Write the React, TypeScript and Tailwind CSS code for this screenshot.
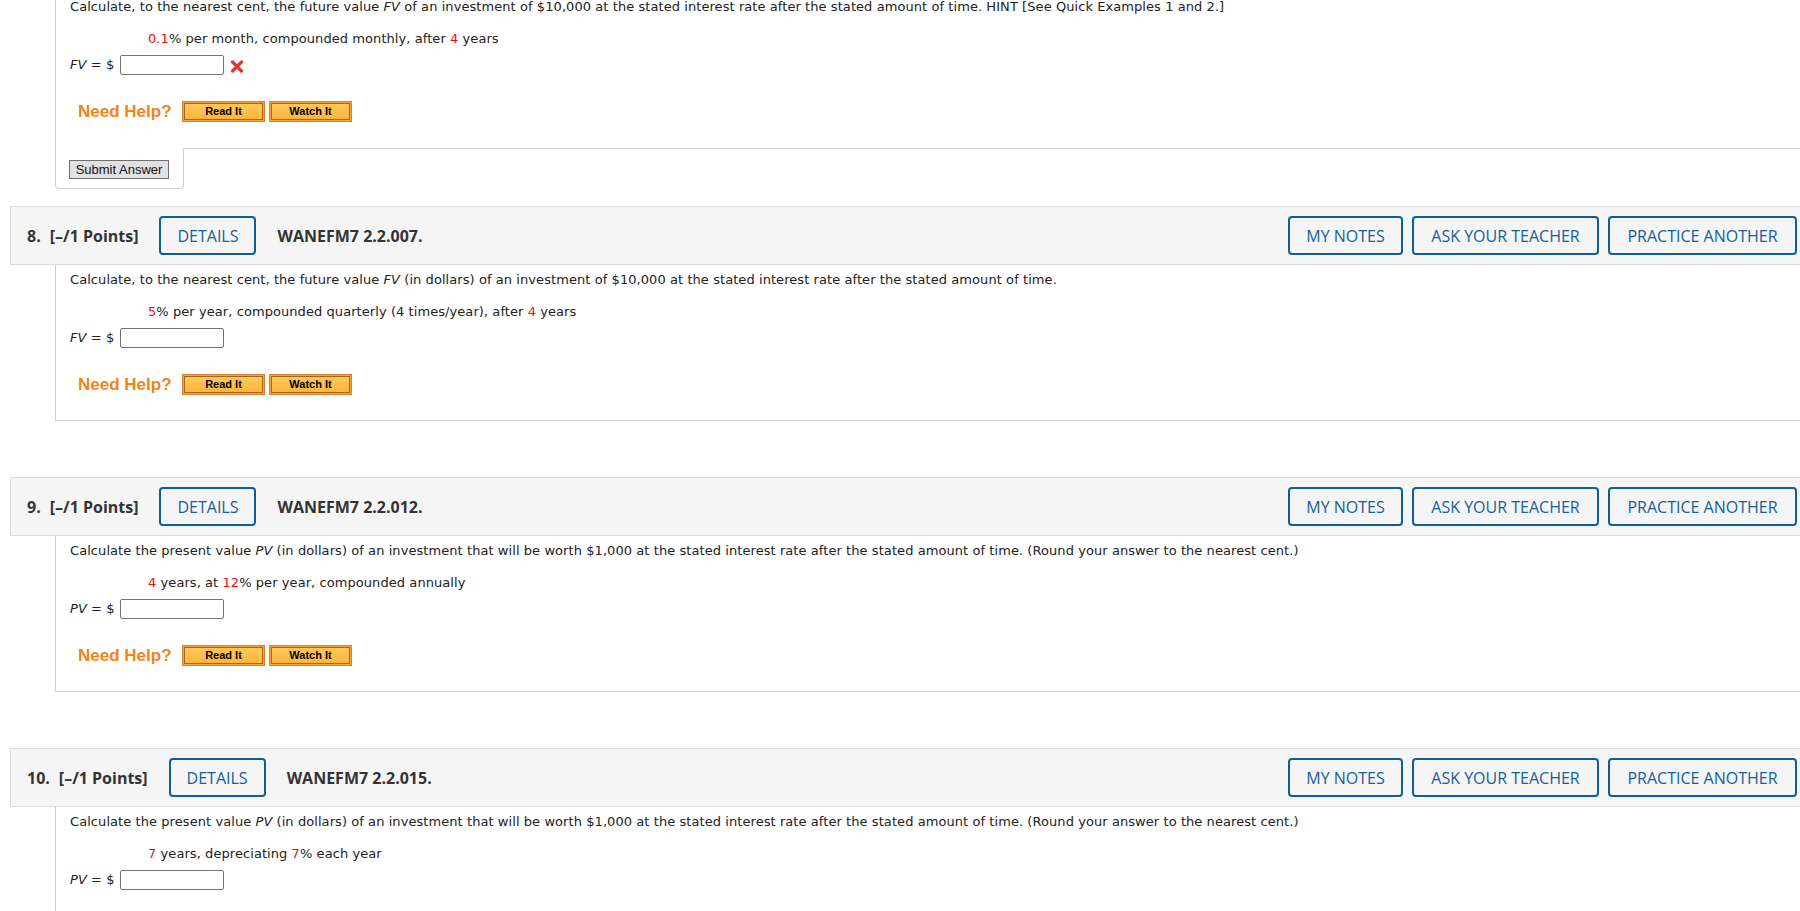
import React from 'react';

const bodyFont = "font-['DejaVu_Sans',Verdana,sans-serif] tracking-[0.07px]";
const headFont = "font-['Open_Sans','Noto_Sans',sans-serif]";

const Red: React.FC<{ children: React.ReactNode }> = ({ children }) => (
  <span className="text-[#e41010]">{children}</span>
);

const HelpButton: React.FC<{ label: string }> = ({ label }) => (
  <button className="h-[21px] w-[83px] border border-[#d9822b] bg-[#f7a23c] p-[1px]">
    <span className="flex h-full w-full items-center justify-center border border-[#a8641f] bg-gradient-to-b from-[#ffc85a] to-[#ffb636] font-['Liberation_Sans',Arial,sans-serif] text-[11px] font-bold leading-none tracking-normal text-black">
      {label}
    </span>
  </button>
);

const NeedHelp: React.FC = () => (
  <div className="ml-[8px] flex h-[21px] items-center">
    <span className="w-[104px] font-['Liberation_Sans',Arial,sans-serif] text-[17px] font-semibold tracking-normal text-[#f08519]">
      Need Help?
    </span>
    <div className="flex gap-[4px]">
      <HelpButton label="Read It" />
      <HelpButton label="Watch It" />
    </div>
  </div>
);

const AnswerRow: React.FC<{ name: string; wrong?: boolean }> = ({ name, wrong }) => (
  <div className="flex h-[20px] items-center">
    <span className="w-[50px] whitespace-nowrap">
      <i>{name}</i> = $
    </span>
    <input className="h-[20px] w-[104px] rounded-[2px] border border-[#767676] bg-white" />
    {wrong && (
      <svg className="ml-[6px] mt-[3px]" width="14" height="13" viewBox="0 0 14 13">
        <path d="M2.5 2 L11.5 11 M11.5 2 L2.5 11" stroke="#e23636" strokeWidth="3.2" strokeLinecap="round" />
      </svg>
    )}
  </div>
);

const OutlineButton: React.FC<{ label: string; width: string }> = ({ label, width }) => (
  <button
    className={`${width} flex h-[39px] items-center justify-center rounded-[4px] border-2 border-[#0e5f99] bg-transparent text-[16px] text-[#14609a]`}
  >
    {label}
  </button>
);

type QuestionProps = {
  num: number;
  code: string;
  prompt: React.ReactNode;
  line: React.ReactNode;
  name: string;
  first?: boolean;
};

const Question: React.FC<QuestionProps> = ({ num, code, prompt, line, name, first }) => (
  <div className={first ? 'mt-[17px]' : 'mt-[56px]'}>
    <div className={`ml-[10px] mr-[-4px] flex h-[59px] items-center border border-[#dcdcdc] bg-[#f5f5f5] pl-[16px] pr-[6px] ${headFont} text-[16px] text-[#333]`}>
      <span className="font-bold">{num}.</span>
      <span className="ml-[9px] font-bold">[–/1 Points]</span>
      <span className="ml-[21px]">
        <OutlineButton label="DETAILS" width="w-[97px]" />
      </span>
      <span className="ml-[21px] font-bold">{code}</span>
      <div className="ml-auto flex gap-[9px]">
        <OutlineButton label="MY NOTES" width="w-[115px]" />
        <OutlineButton label="ASK YOUR TEACHER" width="w-[187px]" />
        <OutlineButton label="PRACTICE ANOTHER" width="w-[189px]" />
      </div>
    </div>
    <div className={`ml-[55px] border-b border-l border-[#cfcfcf] pb-[25px] pl-[14px] pt-[7px] ${bodyFont} text-[13px] leading-[16px] text-[#222]`}>
      <p>{prompt}</p>
      <p className="ml-[78px] mt-[16px]">{line}</p>
      <div className="mt-[8px]">
        <AnswerRow name={name} />
      </div>
      <div className="mt-[26px]">
        <NeedHelp />
      </div>
    </div>
  </div>
);

export default function App() {
  return (
    <div className="min-h-[911px] w-full overflow-hidden bg-white">
      {/* previous question, already answered */}
      <div className={`${bodyFont} text-[13px] leading-[16px] text-[#222]`}>
        <div className="ml-[55px] border-l border-[#cfcfcf] pb-[26px] pl-[14px]">
          <p className="mt-[-1px]">
            Calculate, to the nearest cent, the future value <i>FV</i> of an investment of $10,000 at the stated
            interest rate after the stated amount of time. HINT [See Quick Examples 1 and 2.]
          </p>
          <p className="ml-[78px] mt-[16px]">
            <Red>0.1</Red>% per month, compounded monthly, after <Red>4</Red> years
          </p>
          <div className="mt-[8px]">
            <AnswerRow name="FV" wrong />
          </div>
          <div className="mt-[26px]">
            <NeedHelp />
          </div>
        </div>
        <div className="ml-[55px] flex">
          <div className="h-[41px] w-[129px] rounded-b-[4px] border-b border-l border-r border-[#cfcfcf] pl-[13px] pt-[12px]">
            <button className="h-[19px] w-[100px] border border-[#707070] bg-[#e1e1e1] font-['Liberation_Sans',Arial,sans-serif] text-[13px] leading-none tracking-normal text-[#111]">
              Submit Answer
            </button>
          </div>
          <div className="flex-1 border-t border-[#cfcfcf]" />
        </div>
      </div>

      <Question
        first
        num={8}
        code="WANEFM7 2.2.007."
        name="FV"
        prompt={
          <>
            Calculate, to the nearest cent, the future value <i>FV</i> (in dollars) of an investment of $10,000 at the
            stated interest rate after the stated amount of time.
          </>
        }
        line={
          <>
            <Red>5</Red>% per year, compounded quarterly (4 times/year), after <Red>4</Red> years
          </>
        }
      />
      <Question
        num={9}
        code="WANEFM7 2.2.012."
        name="PV"
        prompt={
          <>
            Calculate the present value <i>PV</i> (in dollars) of an investment that will be worth $1,000 at the stated
            interest rate after the stated amount of time. (Round your answer to the nearest cent.)
          </>
        }
        line={
          <>
            <Red>4</Red> years, at <Red>12</Red>% per year, compounded annually
          </>
        }
      />
      <Question
        num={10}
        code="WANEFM7 2.2.015."
        name="PV"
        prompt={
          <>
            Calculate the present value <i>PV</i> (in dollars) of an investment that will be worth $1,000 at the stated
            interest rate after the stated amount of time. (Round your answer to the nearest cent.)
          </>
        }
        line={
          <>
            <Red>7</Red> years, depreciating <Red>7</Red>% each year
          </>
        }
      />
    </div>
  );
}
